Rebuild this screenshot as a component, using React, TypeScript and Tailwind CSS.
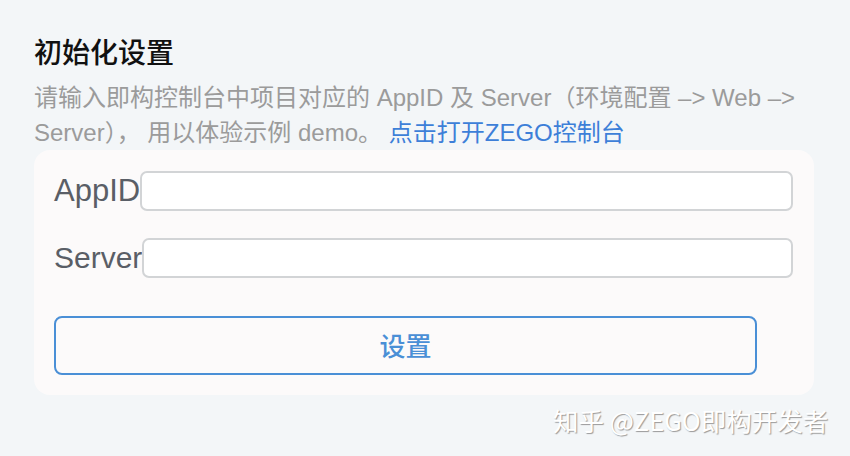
const font = "font-['Liberation_Sans','Noto_Sans_CJK_SC',sans-serif]";

export default function App() {
  return (
    <div className={`relative min-h-screen w-full bg-[#f3f6f8] px-[34px] pt-[34px] ${font}`}>
      <h1 className="text-[28px] font-medium leading-[40px] text-[#111111]">初始化设置</h1>
      <p className="mt-[6px] text-[24px] leading-[35px] text-[#9b9b9b]">
        请输入即构控制台中项目对应的 AppID 及 Server（环境配置 –&gt; Web –&gt; Server）， 用以体验示例 demo。{" "}
        <a className="text-[#3d7fd8]">点击打开ZEGO控制台</a>
      </p>

      <div className="w-[780px] rounded-[16px] bg-[#fcfafa] pt-[21px] pb-[20px] pl-[20px] pr-[21px]">
        <div className="flex items-center">
          <label className="text-[31px] leading-[40px] text-[#5a5e66]">AppID</label>
          <input className="h-[40px] flex-1 rounded-[7px] border-2 border-[#d2d4d6] bg-white outline-none" />
        </div>
        <div className="mt-[27px] flex items-center">
          <label className="text-[30px] leading-[40px] text-[#5a5e66]">Server</label>
          <input className="h-[40px] flex-1 rounded-[7px] border-2 border-[#d2d4d6] bg-white outline-none" />
        </div>
        <button className="mt-[38px] flex h-[59px] w-[703px] items-center justify-center rounded-[8px] border-2 border-[#4a8fd6] bg-transparent pt-[4px] text-[26px] font-medium text-[#4a8fd6]">
          设置
        </button>
      </div>

      <div className="absolute left-[553px] top-[402px] font-['Noto_Sans_CJK_SC',sans-serif] text-[25.5px] leading-[36px] text-white [text-shadow:1px_1px_1px_#9a9a9a]">
        知乎 @ZEGO即构开发者
      </div>
    </div>
  );
}
